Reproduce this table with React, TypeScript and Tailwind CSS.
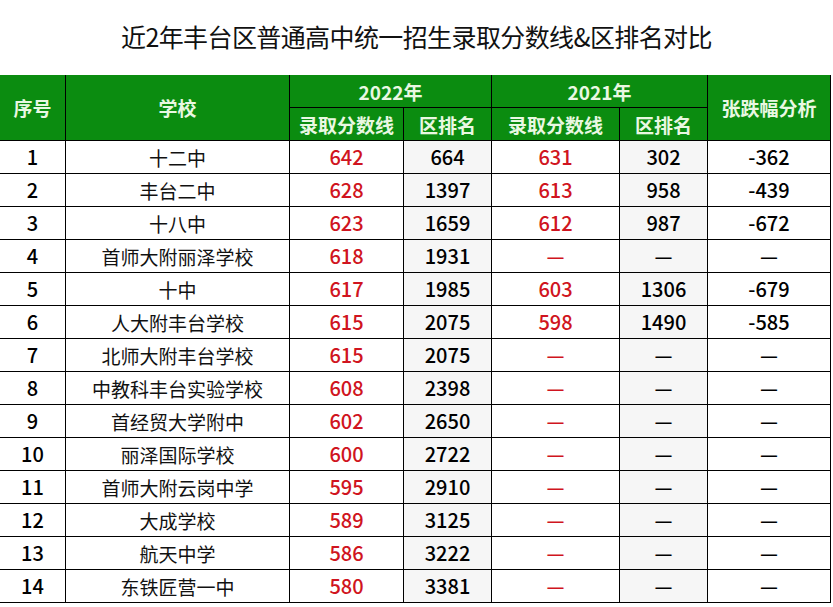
import React from "react";

type Row = {
  no: number;
  school: string;
  score22: string;
  rank22: string;
  score21: string;
  rank21: string;
  diff: string;
};

const rows: Row[] = [
  { no: 1, school: "十二中", score22: "642", rank22: "664", score21: "631", rank21: "302", diff: "-362" },
  { no: 2, school: "丰台二中", score22: "628", rank22: "1397", score21: "613", rank21: "958", diff: "-439" },
  { no: 3, school: "十八中", score22: "623", rank22: "1659", score21: "612", rank21: "987", diff: "-672" },
  { no: 4, school: "首师大附丽泽学校", score22: "618", rank22: "1931", score21: "—", rank21: "—", diff: "—" },
  { no: 5, school: "十中", score22: "617", rank22: "1985", score21: "603", rank21: "1306", diff: "-679" },
  { no: 6, school: "人大附丰台学校", score22: "615", rank22: "2075", score21: "598", rank21: "1490", diff: "-585" },
  { no: 7, school: "北师大附丰台学校", score22: "615", rank22: "2075", score21: "—", rank21: "—", diff: "—" },
  { no: 8, school: "中教科丰台实验学校", score22: "608", rank22: "2398", score21: "—", rank21: "—", diff: "—" },
  { no: 9, school: "首经贸大学附中", score22: "602", rank22: "2650", score21: "—", rank21: "—", diff: "—" },
  { no: 10, school: "丽泽国际学校", score22: "600", rank22: "2722", score21: "—", rank21: "—", diff: "—" },
  { no: 11, school: "首师大附云岗中学", score22: "595", rank22: "2910", score21: "—", rank21: "—", diff: "—" },
  { no: 12, school: "大成学校", score22: "589", rank22: "3125", score21: "—", rank21: "—", diff: "—" },
  { no: 13, school: "航天中学", score22: "586", rank22: "3222", score21: "—", rank21: "—", diff: "—" },
  { no: 14, school: "东铁匠营一中", score22: "580", rank22: "3381", score21: "—", rank21: "—", diff: "—" },
];

const cell = "flex items-center justify-center border-r border-b border-black";
const head = `${cell} bg-[#0b8c10] text-[#e9f8e2] font-bold text-[19px]`;
const num = "text-[20px] font-medium";

export default function App() {
  return (
    <div
      className="w-[833px] h-[607px] bg-white overflow-hidden"
      style={{ fontFamily: '"Noto Sans CJK SC", "Noto Sans", sans-serif' }}
    >
      <div className="h-[75px] flex items-center justify-center pb-[2px]">
        <h1 className="text-[25px] text-[#111] tracking-[-0.6px]">近2年丰台区普通高中统一招生录取分数线&amp;区排名对比</h1>
      </div>

      <div className="grid w-[831px] grid-cols-[66px_224px_114px_88px_128px_88px_123px] grid-rows-[33px_33px] auto-rows-[33px] leading-none">
        <div className={`${head} row-span-2`}>序号</div>
        <div className={`${head} row-span-2`}>学校</div>
        <div className={`${head} col-span-2`}>2022年</div>
        <div className={`${head} col-span-2`}>2021年</div>
        <div className={`${head} row-span-2`}>张跌幅分析</div>
        <div className={head}>录取分数线</div>
        <div className={head}>区排名</div>
        <div className={head}>录取分数线</div>
        <div className={head}>区排名</div>

        {rows.map(r => (
          <React.Fragment key={r.no}>
            <div className={`${cell} ${num} text-black`}>{r.no}</div>
            <div className={`${cell} text-[19px] text-[#111]`}>{r.school}</div>
            <div className={`${cell} ${num} text-[#d01420]`}>{r.score22}</div>
            <div className={`${cell} ${num} text-black bg-[#f6f6f6]`}>{r.rank22}</div>
            <div className={`${cell} ${num} text-[#d01420]`}>{r.score21}</div>
            <div className={`${cell} ${num} text-black bg-[#f6f6f6]`}>{r.rank21}</div>
            <div className={`${cell} ${num} text-black`}>{r.diff}</div>
          </React.Fragment>
        ))}
      </div>
    </div>
  );
}
